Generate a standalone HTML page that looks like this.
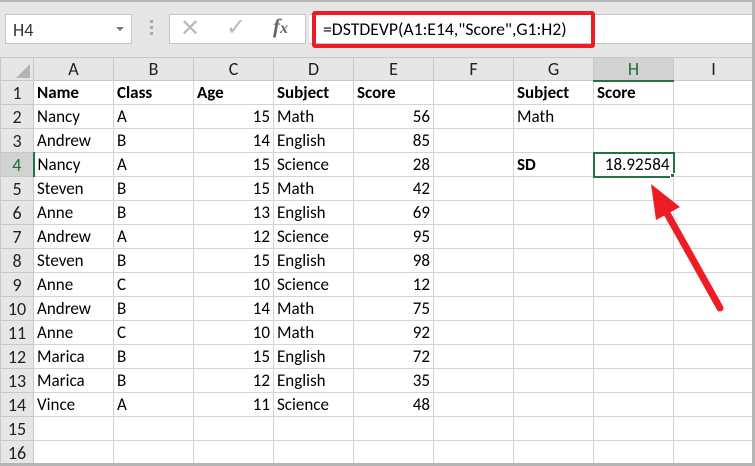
<!DOCTYPE html>
<html><head><meta charset="utf-8"><style>
*{margin:0;padding:0;box-sizing:border-box}
body{width:755px;height:466px;background:#e6e6e6;position:relative;overflow:hidden;font-family:Calibri,"Carlito","Liberation Sans",sans-serif;font-size:17px;color:#000}
.a{position:absolute}
table{position:absolute;left:0;top:57px;border-collapse:collapse;table-layout:fixed;background:#fff}
td{border:1px solid #d4d4d4;height:24px;padding:0 3px;white-space:nowrap;overflow:hidden;font-size:17px;line-height:20px}
td.h{background:#e6e6e6;text-align:center;color:#222;border-color:#c8c8c8;font-size:18px}
tr.top td{height:23px}
td.r{text-align:right}
b{font-weight:bold}
</style></head><body>
<div class="a" style="left:0;top:0;width:755px;height:2px;background:#b5b5b5"></div>
<div class="a" style="left:5px;top:14px;width:127px;height:30px;background:#fff;border:1px solid #c6c6c6;padding:4px 7px;font-size:18px;color:#333">H4</div>
<div class="a" style="left:116px;top:27px;border-left:4px solid transparent;border-right:4px solid transparent;border-top:4px solid #777"></div>
<div class="a" style="left:150px;top:20px;width:3px;height:18px;background:repeating-linear-gradient(#aaa 0 3px,transparent 3px 6px)"></div>
<div class="a" style="left:169px;top:14px;width:137px;height:30px;background:#fff;border:1px solid #c6c6c6"></div>
<div class="a" style="left:180px;top:14px;font-size:24px;color:#bbb">✕</div>
<div class="a" style="left:226px;top:13px;font-size:24px;color:#bbb">✓</div>
<div class="a" style="left:273px;top:14px;font-size:21px;font-style:italic;font-weight:bold;font-family:'Liberation Serif',serif;color:#666">f<span style="font-size:16px">x</span></div>
<div class="a" style="left:309px;top:14px;width:446px;height:30px;background:#fff;border-top:1px solid #c6c6c6;border-bottom:1px solid #c6c6c6"></div>
<div class="a" style="left:312px;top:11px;width:283px;height:37px;border:4px solid #ee1c25;border-radius:3px;padding:4px 7px;font-size:17.7px;line-height:21px;white-space:nowrap">=DSTDEVP(A1:E14,"Score",G1:H2)</div>
<table>
<colgroup><col style="width:32px"><col style="width:80px"><col style="width:80px"><col style="width:80px"><col style="width:80px"><col style="width:80px"><col style="width:80px"><col style="width:80px"><col style="width:80px"><col style="width:80px"></colgroup>
<tr class="top"><td class="h" style="background:#e6e6e6"><div style="width:0;height:0;border-left:14px solid transparent;border-bottom:14px solid #b4b4b4;margin-left:12px;margin-top:4px"></div></td><td class="h">A</td><td class="h">B</td><td class="h">C</td><td class="h">D</td><td class="h">E</td><td class="h">F</td><td class="h">G</td><td class="h" style="background:#d2d2d2;color:#1e6b3a;border-bottom:2px solid #217346">H</td><td class="h">I</td></tr>
<tr><td class="h">1</td><td><b>Name</b></td><td><b>Class</b></td><td><b>Age</b></td><td><b>Subject</b></td><td><b>Score</b></td><td></td><td><b>Subject</b></td><td><b>Score</b></td><td></td></tr>
<tr><td class="h">2</td><td>Nancy</td><td>A</td><td class="r">15</td><td>Math</td><td class="r">56</td><td></td><td>Math</td><td></td><td></td></tr>
<tr><td class="h">3</td><td>Andrew</td><td>B</td><td class="r">14</td><td>English</td><td class="r">85</td><td></td><td></td><td></td><td></td></tr>
<tr><td class="h" style="background:#d2d2d2;color:#1e6b3a;border-right:2px solid #217346">4</td><td>Nancy</td><td>A</td><td class="r">15</td><td>Science</td><td class="r">28</td><td></td><td><b>SD</b></td><td class="r" style="border:2px solid #217346">18.92584</td><td></td></tr>
<tr><td class="h">5</td><td>Steven</td><td>B</td><td class="r">15</td><td>Math</td><td class="r">42</td><td></td><td></td><td></td><td></td></tr>
<tr><td class="h">6</td><td>Anne</td><td>B</td><td class="r">13</td><td>English</td><td class="r">69</td><td></td><td></td><td></td><td></td></tr>
<tr><td class="h">7</td><td>Andrew</td><td>A</td><td class="r">12</td><td>Science</td><td class="r">95</td><td></td><td></td><td></td><td></td></tr>
<tr><td class="h">8</td><td>Steven</td><td>B</td><td class="r">15</td><td>English</td><td class="r">98</td><td></td><td></td><td></td><td></td></tr>
<tr><td class="h">9</td><td>Anne</td><td>C</td><td class="r">10</td><td>Science</td><td class="r">12</td><td></td><td></td><td></td><td></td></tr>
<tr><td class="h">10</td><td>Andrew</td><td>B</td><td class="r">14</td><td>Math</td><td class="r">75</td><td></td><td></td><td></td><td></td></tr>
<tr><td class="h">11</td><td>Anne</td><td>C</td><td class="r">10</td><td>Math</td><td class="r">92</td><td></td><td></td><td></td><td></td></tr>
<tr><td class="h">12</td><td>Marica</td><td>B</td><td class="r">15</td><td>English</td><td class="r">72</td><td></td><td></td><td></td><td></td></tr>
<tr><td class="h">13</td><td>Marica</td><td>B</td><td class="r">12</td><td>English</td><td class="r">35</td><td></td><td></td><td></td><td></td></tr>
<tr><td class="h">14</td><td>Vince</td><td>A</td><td class="r">11</td><td>Science</td><td class="r">48</td><td></td><td></td><td></td><td></td></tr>
<tr><td class="h">15</td><td></td><td></td><td></td><td></td><td></td><td></td><td></td><td></td><td></td></tr>
<tr><td class="h">16</td><td></td><td></td><td></td><td></td><td></td><td></td><td></td><td></td><td></td></tr>
</table>
<div class="a" style="left:670px;top:173px;width:5px;height:5px;background:#217346;border:1px solid #fff"></div>
<div class="a" style="left:752px;top:0;width:3px;height:466px;background:#b5b5b5"></div>
<div class="a" style="left:0;top:463px;width:755px;height:3px;background:#b5b5b5"></div>
<svg class="a" style="left:0;top:0" width="755" height="466">
<line x1="720" y1="308" x2="664" y2="208" stroke="#ee1c25" stroke-width="7" stroke-linecap="round"/>
<polygon points="651,184 680,207 656,220" fill="#ee1c25"/>
</svg>
</body></html>
